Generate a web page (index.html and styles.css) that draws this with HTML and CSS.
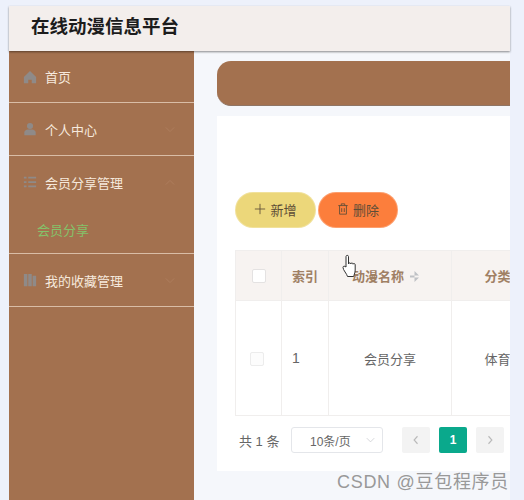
FILE: index.html
```html
<!DOCTYPE html>
<html lang="zh-CN">
<head>
    <meta charset="UTF-8">
    <title>在线动漫信息平台</title>
    <link rel="stylesheet" href="styles.css">
</head>
<body>
    <div class="app">
        <header class="topbar">
            <h1>在线动漫信息平台</h1>
        </header>
        <div class="layout">
            <nav class="sidebar">
                <div class="menu-item item-home">
                    <svg class="menu-icon" viewBox="0 0 16 16"><path d="M8 1 1 8v7h5v-4h4v4h5V8z"/></svg>
                    <span>首页</span>
                </div>
                <div class="menu-item item-user">
                    <svg class="menu-icon" viewBox="0 0 16 16"><circle cx="8" cy="4.5" r="3.5"/><path d="M1.5 15v-3c0-2 2-3.5 4-3.5h5c2 0 4 1.500 4 3.500v3z"/></svg>
                    <span>个人中心</span>
                    <svg class="arrow" viewBox="0 0 12 8"><path d="m1 1.500 5 5 5-5"/></svg>
                </div>
                <div class="menu-group">
                    <div class="menu-item item-share">
                        <svg class="menu-icon" viewBox="0 0 16 16"><path d="M1 2h3v2H1zM6 2h9v2H6zM1 7h3v2H1zM6 7h9v2H6zM1 12h3v2H1zM6 12h9v2H6z"/></svg>
                        <span>会员分享管理</span>
                        <svg class="arrow" viewBox="0 0 12 8"><path d="m1 6.500 5-5 5 5"/></svg>
                    </div>
                    <div class="submenu-item">会员分享</div>
                </div>
                <div class="menu-item item-fav">
                    <svg class="menu-icon" viewBox="0 0 16 16"><path d="M1 1h4v14H1zM6 1h4v14H6zM11 3h4v12h-4z"/></svg>
                    <span>我的收藏管理</span>
                    <svg class="arrow" viewBox="0 0 12 8"><path d="m1 1.500 5 5 5-5"/></svg>
                </div>
            </nav>
            <main class="content">
                <div class="crumb"></div>
                <section class="card">
                    <div class="actions">
                        <button class="btn btn-add">
                            <svg class="btn-icon" viewBox="0 0 14 14"><path d="M7 1v12M1 7h12"/></svg>新增
                        </button>
                        <button class="btn btn-del">
                            <svg class="btn-icon" viewBox="0 0 14 14"><path d="M1.500 3h11M5 3V1h4v2M3 3v10h8V3M5.500 6v4.500M8.500 6v4.500"/></svg>删除
                        </button>
                    </div>
                    <div class="table-wrap">
                        <table class="data-table">
                            <colgroup>
                                <col class="col-check">
                                <col class="col-index">
                                <col class="col-name">
                                <col class="col-type">
                            </colgroup>
                            <thead>
                                <tr>
                                    <th><span class="check"></span></th>
                                    <th>索引</th>
                                    <th>动漫名称<span class="sort"></span></th>
                                    <th>分类</th>
                                </tr>
                            </thead>
                            <tbody>
                                <tr>
                                    <td><span class="check check-row"></span></td>
                                    <td class="cell-index">1</td>
                                    <td>会员分享</td>
                                    <td>体育</td>
                                </tr>
                            </tbody>
                        </table>
                    </div>
                    <div class="pager">
                        <span class="total">共 1 条</span>
                        <div class="page-size">
                            <span>10条/页</span>
                            <svg class="size-arrow" viewBox="0 0 12 8"><path d="m1 1.500 5 5 5-5"/></svg>
                        </div>
                        <span class="page-btn page-prev">
                            <svg viewBox="0 0 8 12"><path d="M6 1 1.500 6 6 11"/></svg>
                        </span>
                        <span class="page-num">1</span>
                        <span class="page-btn">
                            <svg viewBox="0 0 8 12"><path d="m2 1 4.500 5L2 11"/></svg>
                        </span>
                    </div>
                </section>
            </main>
        </div>
    </div>

    <svg class="hand" viewBox="0 0 16 24">
        <path d="M4 2.500c0-1.500 2.500-1.500 2.500 0V10c0-1.500 2.300-1.500 2.300 0 0-1.300 2.200-1.300 2.200.2 0-1 2.200-1 2.200.5V16c0 3-1.500 5.500-1.500 6.500H5.500C5 20 1 16 1 13.500c0-1.500 1.500-1.800 3-.5z"/>
    </svg>
    <div class="watermark">CSDN @豆包程序员</div>
</body>
</html>
```

FILE: styles.css
```css
* {
    box-sizing: border-box;
}
html, body {
    height: 100%;
}
body {
    margin: 0;
    height: 500px;
    overflow: hidden;
    background-color: #edf1fb;
    font-family: "Liberation Sans", "Noto Sans CJK SC", sans-serif;
    padding: 6px 14px 0 9px;
}
.app {
    height: 494px;
    display: flex;
    flex-direction: column;
}
.topbar {
    height: 45px;
    flex: none;
    background-color: #f3eeec;
    box-shadow: 0 1px 2px rgba(0, 0, 0, 0.45);
    padding-left: 22px;
    display: flex;
    align-items: center;
    position: relative;
}
.topbar h1 {
    margin: 0 0 7px;
    font-size: 18.5px;
    font-weight: 700;
    color: #1c1c1c;
}
.layout {
    flex: 1;
    display: flex;
    min-height: 0;
}
.sidebar {
    width: 185px;
    flex: none;
    background-color: #a3714f;
    color: #f6e9dd;
    font-size: 13px;
}
.menu-item {
    height: 53px;
    display: flex;
    align-items: center;
    padding: 0 19px 0 14px;
    border-bottom: 1px solid #d9bda6;
}
.item-home {
    height: 52px;
}
.menu-group {
    border-bottom: 1px solid #d9bda6;
}
.menu-group .menu-item {
    height: 52px;
    border-bottom: none;
}
.menu-icon {
    width: 14px;
    height: 14px;
    margin-right: 8px;
    fill: #8f8a88;
}
.arrow {
    width: 10px;
    height: 7px;
    margin-left: auto;
    fill: none;
    stroke: #b08060;
    stroke-width: 1;
}
.submenu-item {
    height: 45px;
    padding: 0 0 2px 28px;
    display: flex;
    align-items: center;
    color: #85c26a;
}
.content {
    flex: 1;
    min-width: 0;
    background-color: #f5f7fb;
    padding: 10px 0 0 23px;
    overflow: hidden;
}
.crumb {
    height: 45px;
    background-color: #a3714f;
    border-radius: 14px 0 0 14px;
    border-bottom: 1px solid #8f7565;
}
.card {
    margin-top: 10px;
    height: 355px;
    background-color: #fff;
    padding: 76px 0 0 18px;
    overflow: hidden;
}
.actions {
    display: flex;
    gap: 2px;
}
.btn {
    width: 81px;
    height: 36px;
    border: 1px solid rgba(255, 255, 255, 0.25);
    border-radius: 18px;
    font-family: inherit;
    font-size: 13px;
    color: #5d4d37;
    padding: 0 0 2px;
    display: flex;
    align-items: center;
    justify-content: center;
    gap: 4px;
}
.btn-add {
    background-color: #ecd77a;
}
.btn-del {
    width: 80px;
    background-color: #fc7e3c;
}
.btn-icon {
    width: 12px;
    height: 12px;
    fill: none;
    stroke: #5d4d37;
    stroke-width: 1;
}
.table-wrap {
    margin-top: 22px;
    overflow: hidden;
}
.data-table {
    width: 308px;
    table-layout: fixed;
    border-collapse: collapse;
    font-size: 13px;
    color: #666;
    text-align: center;
}
.col-check {
    width: 46px;
}
.col-index {
    width: 47px;
}
.col-name {
    width: 123px;
}
.col-type {
    width: 92px;
}
.data-table th, .data-table td {
    border: 1px solid #f0eeed;
    padding: 0;
}
.data-table th {
    height: 50px;
    background-color: #f7f3f1;
    color: #a08064;
    font-weight: 700;
}
.data-table td {
    height: 115px;
}
.cell-index {
    text-align: left;
    padding-left: 10px !important;
    font-size: 14px;
}
.check {
    display: inline-block;
    width: 14px;
    height: 14px;
    background-color: #fff;
    border: 1px solid #e4e2e2;
    border-radius: 2px;
    vertical-align: middle;
}
.check-row {
    background-color: #fcfcfc;
    border-color: #ececec;
    margin-right: 3px;
}
.sort {
    display: inline-block;
    width: 9px;
    height: 11px;
    margin: 0 9px 0 6px;
    vertical-align: -1px;
    background-color: #bfc1c5;
    clip-path: polygon(50% 0, 100% 42%, 0 42%, 0 58%, 100% 58%, 50% 100%);
}
.pager {
    margin-top: 11px;
    display: flex;
    align-items: center;
    font-size: 12px;
    color: #666;
    padding-left: 4px;
}
.total {
    width: 52px;
    font-size: 13px;
}
.page-size {
    width: 92px;
    height: 26px;
    border: 1px solid #e4e6ea;
    border-radius: 3px;
    display: flex;
    align-items: center;
    justify-content: space-between;
    padding: 0 7px 0 18px;
    margin-right: 19px;
}
.size-arrow {
    width: 9px;
    height: 6px;
    fill: none;
    stroke: #c8cacf;
}
.page-btn, .page-num {
    width: 28px;
    height: 26px;
    border-radius: 2px;
    display: flex;
    align-items: center;
    justify-content: center;
}
.page-btn {
    background-color: #f3f3f3;
}
.page-btn svg {
    width: 6px;
    height: 10px;
    fill: none;
    stroke: #b9b9b9;
    stroke-width: 1.5;
}
.page-prev {
    margin-right: 9px;
}
.page-num {
    background-color: #0aa98c;
    color: #fff;
    font-weight: 700;
    margin-right: 9px;
}
.hand {
    position: absolute;
    left: 342px;
    top: 254px;
    width: 16px;
    height: 24px;
    fill: #fff;
    stroke: #333;
    stroke-width: 1;
}
.watermark {
    position: absolute;
    left: 337px;
    top: 467px;
    font-size: 18px;
    letter-spacing: 0.7px;
    color: #999;
    white-space: nowrap;
}
```
